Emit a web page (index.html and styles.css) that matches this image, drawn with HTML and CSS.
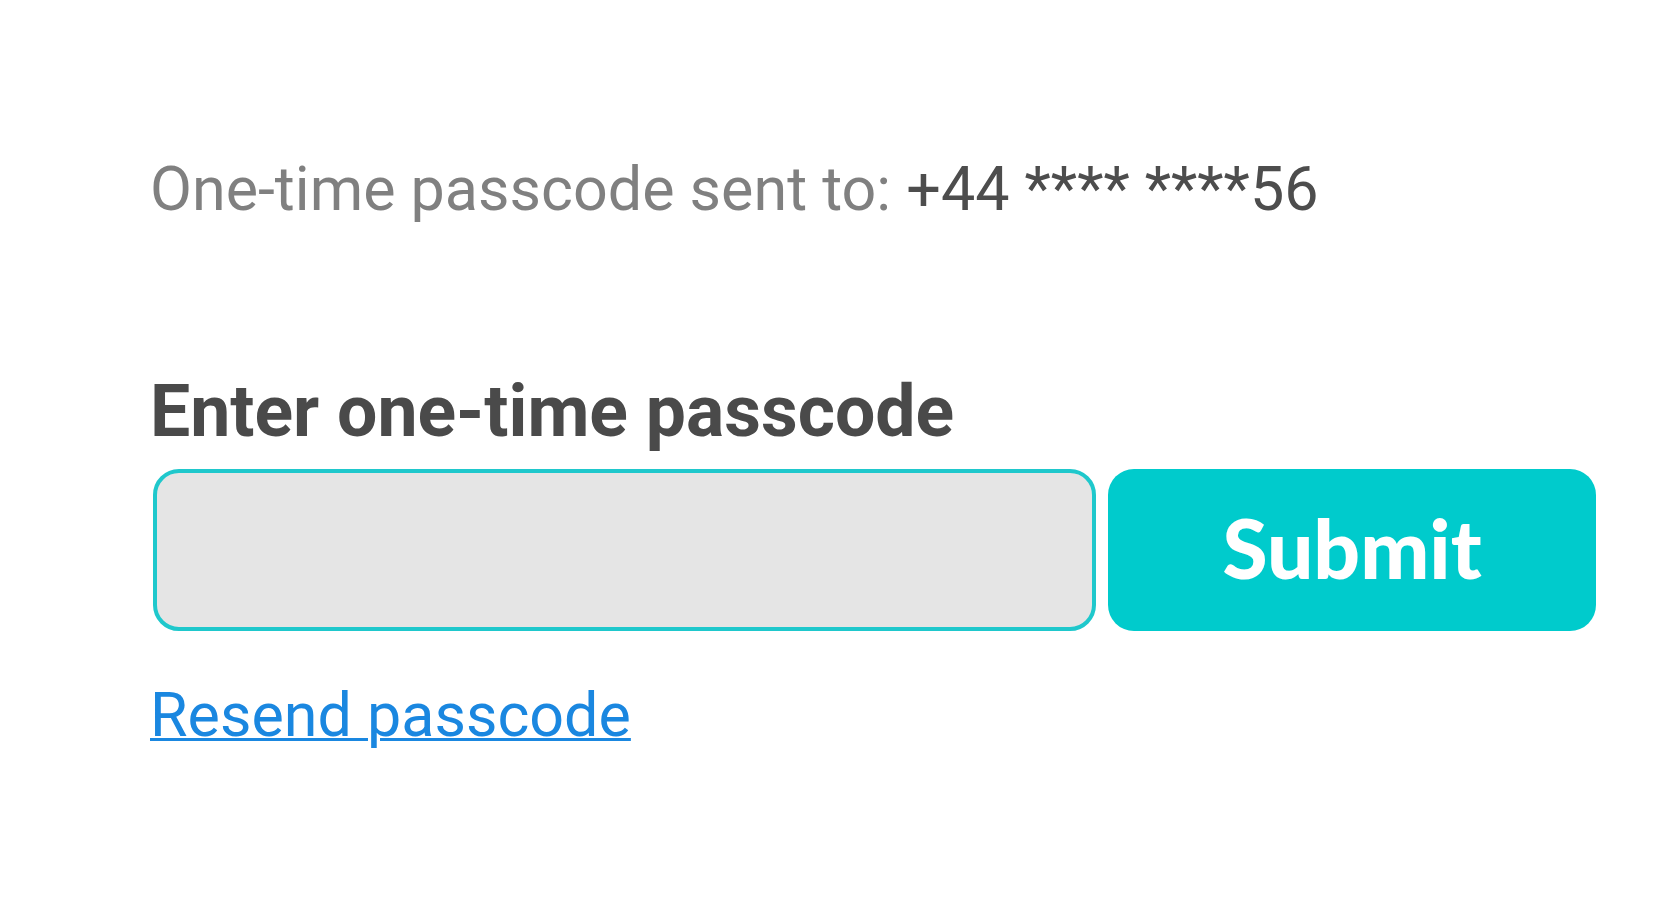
FILE: index.html
```html
<!DOCTYPE html>
<html lang="en">
<head>
<meta charset="utf-8">
<title>Enter one-time passcode</title>
<link rel="stylesheet" href="styles.css">
</head>
<body>
<main class="page">
  <p class="sent">One-time passcode sent to: <span class="phone">+44 **** ****56</span></p>
  <form class="otp-form" onsubmit="return false;">
    <label class="otp-label" for="otp">Enter one-time passcode</label>
    <div class="otp-row">
      <input class="otp-input" id="otp" type="text" inputmode="numeric" autocomplete="one-time-code">
      <button class="submit" type="submit">Submit</button>
    </div>
  </form>
  <a class="resend" href="#">Resend passcode</a>
</main>
</body>
</html>
```
FILE: styles.css
```css
html, body {
  margin: 0;
  padding: 0;
  background: #ffffff;
}

body {
  font-family: Roboto, "Liberation Sans", Arial, sans-serif;
}

.page {
  padding: 153px 84px 0 150px;
  display: flex;
  flex-direction: column;
  align-items: flex-start;
}

.sent {
  margin: 0;
  font-size: 61px;
  line-height: 72px;
  color: #808080;
  font-weight: 400;
}

.phone {
  color: #4d4d4d;
}

.otp-form {
  margin-top: 145px;
  display: flex;
  flex-direction: column;
  align-self: stretch;
}

.otp-label {
  font-size: 71.5px;
  line-height: 84px;
  font-weight: 700;
  color: #4a4a4a;
}

.otp-row {
  margin: 15px 0 0 3px;
  display: flex;
  gap: 12px;
  height: 162px;
}

.otp-input {
  box-sizing: border-box;
  width: 943px;
  height: 162px;
  margin: 0;
  padding: 0 30px;
  border: 4px solid #1fc8cc;
  border-radius: 26px;
  background: #e5e5e5;
  font-family: Roboto, sans-serif;
  font-size: 61px;
  color: #4a4a4a;
  outline: none;
}

.submit {
  box-sizing: border-box;
  width: 488px;
  height: 162px;
  margin: 0;
  padding: 0 0 6px;
  border: none;
  border-radius: 26px;
  background: #00cbcc;
  color: #ffffff;
  font-family: Lato, "Open Sans", sans-serif;
  font-weight: 900;
  font-size: 82px;
  letter-spacing: 0;
  cursor: pointer;
}

.resend {
  margin-top: 48px;
  font-size: 61px;
  line-height: 72px;
  color: #1a87e0;
  text-decoration: underline;
  text-decoration-thickness: 3px;
  text-underline-offset: 2px;
}
```
